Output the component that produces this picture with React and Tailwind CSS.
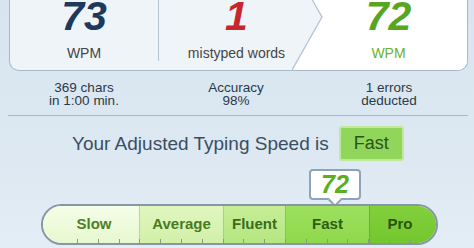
import React from "react";

const ticks = Array.from({ length: 17 }, (_, i) => i);

function Segment({ w, bg, color, label, extra = "" }) {
  return (
    <div
      className={`h-full flex items-center justify-center text-[15px] font-bold ${bg} ${color} ${extra}`}
      style={{ width: w }}
    >
      {label}
    </div>
  );
}

export default function App() {
  return (
    <div className="w-[474px] h-[248px] overflow-hidden bg-gradient-to-b from-[#d8e5f0] via-[#dbe7f1] to-[#e3edf5] font-['Liberation_Sans',Arial,sans-serif]">
      {/* Top card */}
      <div className="relative ml-[9px] w-[459px] -mt-[36px] h-[107px] border-x border-b border-[#a9b9c9] rounded-b-[10px] bg-[#eff4f9] overflow-hidden flex">
        <div className="w-[148px] flex flex-col items-center pt-[32px]">
          <div className="text-[41px] leading-[41px] font-bold italic text-[#1d3a5d]">73</div>
          <div className="mt-[9px] text-[14px] leading-[14px] text-[#454545]">WPM</div>
        </div>
        <div className="w-px h-[97px] bg-[#b4c3d1]" />
        <div className="w-[133px] pl-[22px] flex flex-col items-center pt-[32px]">
          <div className="text-[41px] leading-[41px] font-bold italic text-[#c8262e]">1</div>
          <div className="mt-[9px] text-[14px] leading-[14px] text-[#454545] whitespace-nowrap">mistyped words</div>
        </div>
        <div className="flex-1 pl-[18px] bg-white flex flex-col items-center pt-[32px] [clip-path:polygon(0_0,100%_0,100%_100%,0_100%,30px_50%)]">
          <div className="text-[41px] leading-[41px] font-bold italic text-[#58a61f]">72</div>
          <div className="mt-[9px] text-[14px] leading-[14px] text-[#6cb22c]">WPM</div>
        </div>
        <svg className="absolute left-[282px] top-0" width="34" height="106" viewBox="0 0 34 106">
          <polyline points="0,0 30,53 0,106" fill="none" stroke="#b4c3d1" strokeWidth="1.3" />
        </svg>
      </div>

      {/* Stats row */}
      <div className="ml-[10px] mt-[11px] flex text-[13.5px] leading-[12.5px] text-[#2a3948] text-center">
        <div className="w-[148px]">
          <div>369 chars</div>
          <div>in 1:00 min.</div>
        </div>
        <div className="w-[156px]">
          <div>Accuracy</div>
          <div>98%</div>
        </div>
        <div className="w-[150px]">
          <div>1 errors</div>
          <div>deducted</div>
        </div>
      </div>

      {/* Separator */}
      <div className="ml-[8px] w-[460px] mt-[8px] h-px bg-[#a3b8cb]" />

      {/* Headline */}
      <div className="ml-[72px] mt-[10px] flex items-center">
        <div className="text-[19px] leading-[22px] text-[#3a4e62] whitespace-nowrap">Your Adjusted Typing Speed is</div>
        <div className="ml-[10px] w-[65px] h-[35px] flex items-center justify-center bg-[#8fd65b] border-2 border-[#bfe99d] rounded-[3px] text-[18px] text-[#2d5316]">
          Fast
        </div>
      </div>

      {/* Tooltip */}
      <div className="relative ml-[309px] mt-[8px] w-[52px] h-[31px] bg-white border-2 border-[#8ea3b7] rounded-[4px] flex items-center justify-center">
        <span className="text-[25px] leading-[25px] font-bold italic text-[#5aae22]">72</span>
        <div className="absolute left-1/2 -bottom-[7px] -ml-[5px] w-[10px] h-[10px] rotate-45 bg-white border-r-2 border-b-2 border-[#8ea3b7]" />
      </div>

      {/* Speed bar */}
      <div className="relative ml-[41px] mt-[4px] w-[397px] h-[41px] rounded-full border-2 border-[#8696a6] overflow-hidden flex">
        <Segment w={96} label="Slow" bg="bg-gradient-to-b from-[#f4fde8] to-[#e7f8cf]" color="text-[#4d7f26]" extra="pl-[6px]" />
        <Segment w={84} label="Average" bg="bg-gradient-to-b from-[#e0f6c0] to-[#d2f0a8] border-l border-[#b7d797]" color="text-[#4a7b22]" />
        <Segment w={62} label="Fluent" bg="bg-gradient-to-b from-[#c6ee97] to-[#b5e680] border-l border-[#a6d47a]" color="text-[#3c6c1b]" />
        <Segment w={84} label="Fast" bg="bg-gradient-to-b from-[#9de05e] to-[#8fd84c] border-l border-[#86c553]" color="text-[#2f5d13]" />
        <Segment w={67} label="Pro" bg="bg-gradient-to-b from-[#82d03c] to-[#74c62e] border-l border-[#6cb232]" color="text-[#2a5510]" extra="pr-[6px]" />
        <div className="absolute left-[34px] bottom-0 flex gap-[19.8px]">
          {ticks.map((i) => (
            <div key={i} className="w-px h-[4px] bg-[#8a9a88]" />
          ))}
        </div>
      </div>
    </div>
  );
}
